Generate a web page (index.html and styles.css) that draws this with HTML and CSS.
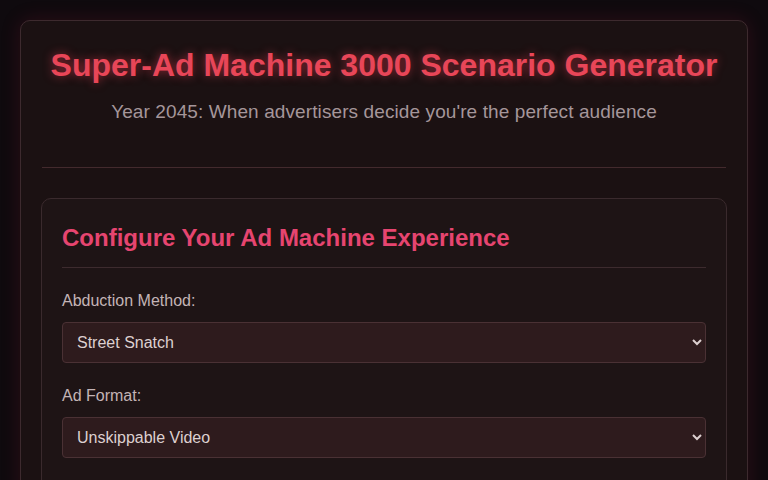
FILE: index.html
```html
<!DOCTYPE html>
<html>
<head>
<meta charset="utf-8">
<link rel="stylesheet" href="styles.css">
</head>
<body>
<div class="container">
  <header class="header">
    <h1 class="title">Super-Ad Machine 3000 Scenario Generator</h1>
    <p class="subtitle">Year 2045: When advertisers decide you're the perfect audience</p>
  </header>
  <section class="panel">
    <h2 class="panel-title">Configure Your Ad Machine Experience</h2>
    <div class="field">
      <label class="label" for="m">Abduction Method:</label>
      <select class="select" id="m"><option>Street Snatch</option></select>
    </div>
    <div class="field">
      <label class="label" for="f">Ad Format:</label>
      <select class="select" id="f"><option>Unskippable Video</option></select>
    </div>
  </section>
</div>
</body>
</html>
```
FILE: styles.css
```css
html, body { margin: 0; padding: 0; }
body {
  background: #0f0a0e;
  font-family: "Liberation Sans", Arial, sans-serif;
  padding: 20px;
  height: 480px;
  box-sizing: border-box;
  overflow: hidden;
}
.container {
  background: #1b1112;
  border: 1px solid #3d2a2e;
  border-radius: 10px;
  padding: 0 20px 20px;
  box-shadow: 0 0 20px rgba(180, 30, 60, 0.18);
}
.header {
  text-align: center;
  padding-top: 26px;
  padding-bottom: 44px;
  border-bottom: 1px solid #432a2d;
  margin: 0 1px 30px;
}
.title {
  margin: 0;
  font-size: 32px;
  font-weight: bold;
  line-height: 36px;
  color: #e84658;
  text-shadow: 0 0 10px rgba(232, 60, 80, 0.6);
}
.subtitle {
  margin: 18px 0 0;
  font-size: 19px;
  line-height: 22px;
  color: #a5969a;
  letter-spacing: 0.1px;
}
.panel {
  border: 1px solid #3a2a2d;
  border-radius: 10px;
  background: #1e1415;
  padding: 20px 20px 20px;
}
.panel-title {
  margin: 0 0 16px;
  padding: 4px 0 14px;
  font-size: 24px;
  line-height: 30px;
  color: #e64570;
  border-bottom: 1px solid #3d2b2e;
}
.field { margin-bottom: 22px; }
.label {
  display: block;
  font-size: 16px;
  line-height: 20px;
  color: #c4b4b6;
  margin: 23px 0 11px;
}
.select {
  display: block;
  width: 100%;
  height: 41px;
  padding: 0 10px 0 10px;
  font-family: "Liberation Sans", Arial, sans-serif;
  font-size: 16px;
  color: #ddd0d0;
  background: #2e1b1d;
  border: 1px solid #4a3134;
  border-radius: 4px;
  box-sizing: border-box;
}
```
